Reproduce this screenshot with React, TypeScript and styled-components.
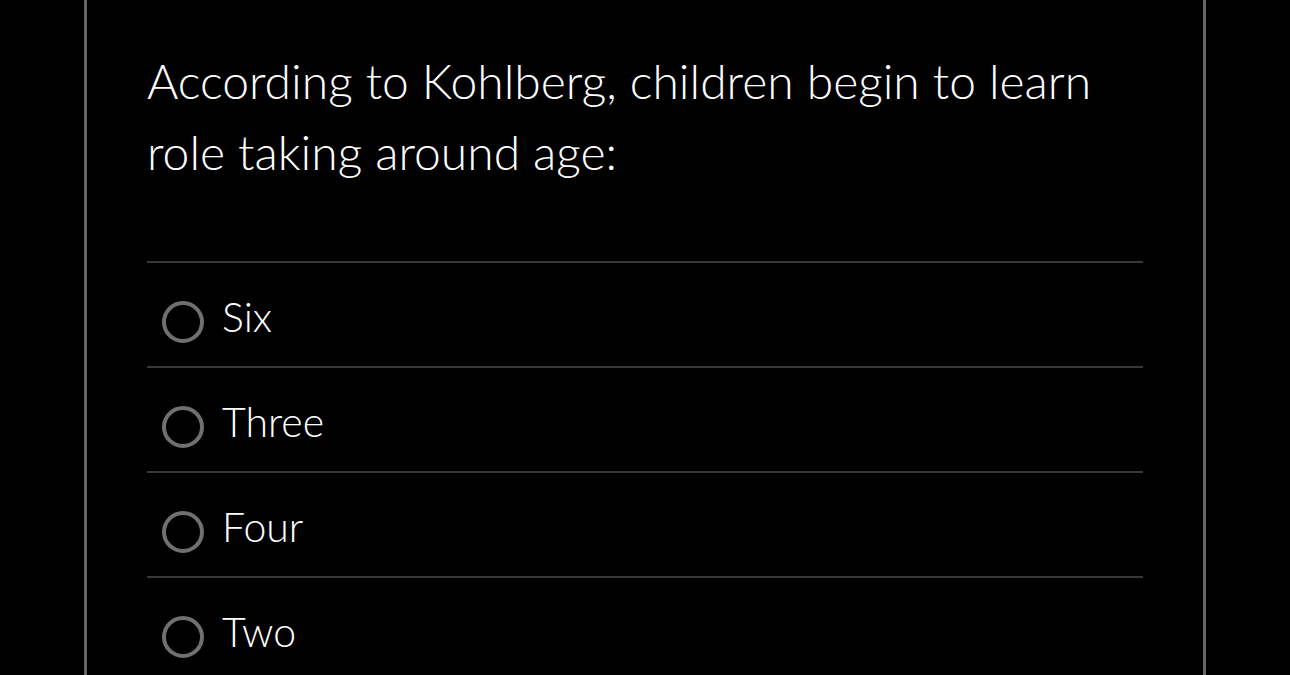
import React from "react";
import styled, { createGlobalStyle } from "styled-components";

const GlobalStyle = createGlobalStyle`
  *, *::before, *::after {
    box-sizing: border-box;
  }
  html, body {
    margin: 0;
    padding: 0;
    background: #000;
  }
  body {
    font-family: Lato, "Open Sans", sans-serif;
    color: #fff;
  }
`;

const Page = styled.div`
  height: 675px;
  overflow: hidden;
  background: #000;
`;

const Card = styled.div`
  margin-left: 84px;
  width: 1122px;
  min-height: 675px;
  border-left: 3px solid #666;
  border-right: 3px solid #666;
  padding: 45px 60px 0 60px;
`;

const Question = styled.h1`
  margin: 0 0 74px;
  font-size: 48px;
  line-height: 71px;
  font-weight: 300;
  letter-spacing: 0;
`;

const Options = styled.ul`
  list-style: none;
  margin: 0;
  padding: 0;
`;

const Option = styled.li`
  display: flex;
  align-items: center;
  height: 105px;
  border-top: 2px solid #383838;
  padding-left: 15px;
`;

const Radio = styled.span`
  width: 42px;
  height: 42px;
  border-radius: 50%;
  border: 4px solid #707070;
  margin-top: 14px;
  flex-shrink: 0;
`;

const Label = styled.span`
  margin-left: 18px;
  font-size: 41px;
  font-weight: 300;
  margin-top: 4px;
`;

const answers = ["Six", "Three", "Four", "Two"];

export default function App() {
  return (
    <Page>
      <GlobalStyle />
      <Card>
        <Question>
          According to Kohlberg, children begin to learn role taking around age:
        </Question>
        <Options>
          {answers.map((a) => (
            <Option key={a}>
              <Radio />
              <Label>{a}</Label>
            </Option>
          ))}
        </Options>
      </Card>
    </Page>
  );
}
